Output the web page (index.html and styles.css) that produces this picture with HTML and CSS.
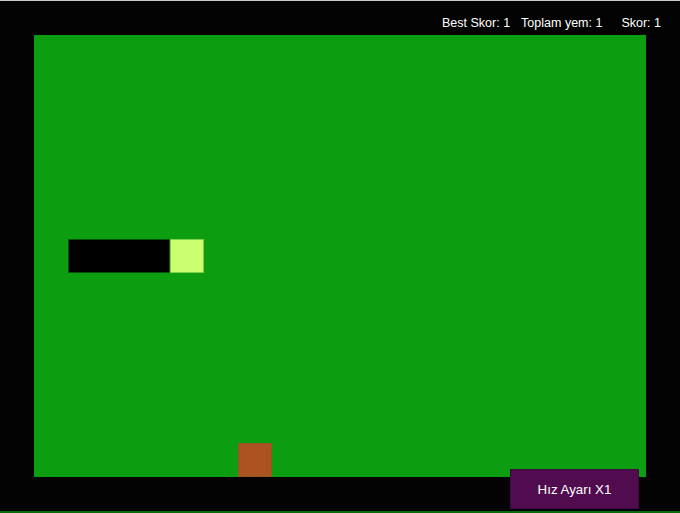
FILE: index.html
```html
<!DOCTYPE html>
<html lang="tr">
<head>
<meta charset="utf-8">
<link rel="stylesheet" href="styles.css">
</head>
<body>
<div class="page">
  <div class="scores">
    <span class="best">Best Skor: 1</span>
    <span class="total">Toplam yem: 1</span>
    <span class="score">Skor: 1</span>
  </div>
  <div class="board">
    <div class="cell body c2"></div>
    <div class="cell body c3"></div>
    <div class="cell body c4"></div>
    <div class="cell head c5"></div>
    <div class="cell food"></div>
  </div>
  <button class="speed">Hız Ayarı X1</button>
  <div class="bottom-line"></div>
</div>
</body>
</html>
```
FILE: styles.css
```css
html, body {
  margin: 0;
  padding: 0;
  background: #000;
}
.page {
  position: relative;
  width: 680px;
  height: 513px;
  background: #030303;
  border-top: 1px solid #c8c8c8;
  box-sizing: border-box;
  font-family: "Liberation Sans", Arial, sans-serif;
  overflow: hidden;
}
.scores {
  height: 34px;
  display: flex;
  justify-content: flex-end;
  align-items: flex-end;
  padding-right: 19px;
  padding-bottom: 5px;
  box-sizing: border-box;
  color: #fff;
  font-size: 12.5px;
}
.total { margin-left: 11px; }
.score { margin-left: 19px; }
.board {
  margin-left: 34px;
  width: 612px;
  height: 442px;
  background: #0c9e10;
  display: grid;
  grid-template-columns: repeat(18, 34px);
  grid-template-rows: repeat(13, 34px);
}
.cell { box-sizing: border-box; }
.body {
  background: #000;
  grid-row: 7;
  border: 1px solid #06500a;
}
.c2 { grid-column: 2; border-right: none; }
.c3 { grid-column: 3; border-left: none; border-right: none; }
.c4 { grid-column: 4; border-left: none; }
.head {
  grid-row: 7;
  grid-column: 5;
  background: #ccff70;
  border: 1px solid #7fd044;
}
.food {
  grid-row: 13;
  grid-column: 7;
  background: #ac5321;
  border: 1px solid #8e5a24;
}
.speed {
  position: absolute;
  left: 510px;
  top: 468px;
  width: 129px;
  height: 40px;
  margin: 0;
  padding: 0;
  background: #500c4f;
  border: 1px solid #3f0a3f;
  color: #fff;
  font-family: "Liberation Sans", Arial, sans-serif;
  font-size: 13.33px;
}
.bottom-line {
  position: absolute;
  left: 0;
  right: 0;
  bottom: 0;
  height: 2px;
  background: #0a6b0a;
}
```
